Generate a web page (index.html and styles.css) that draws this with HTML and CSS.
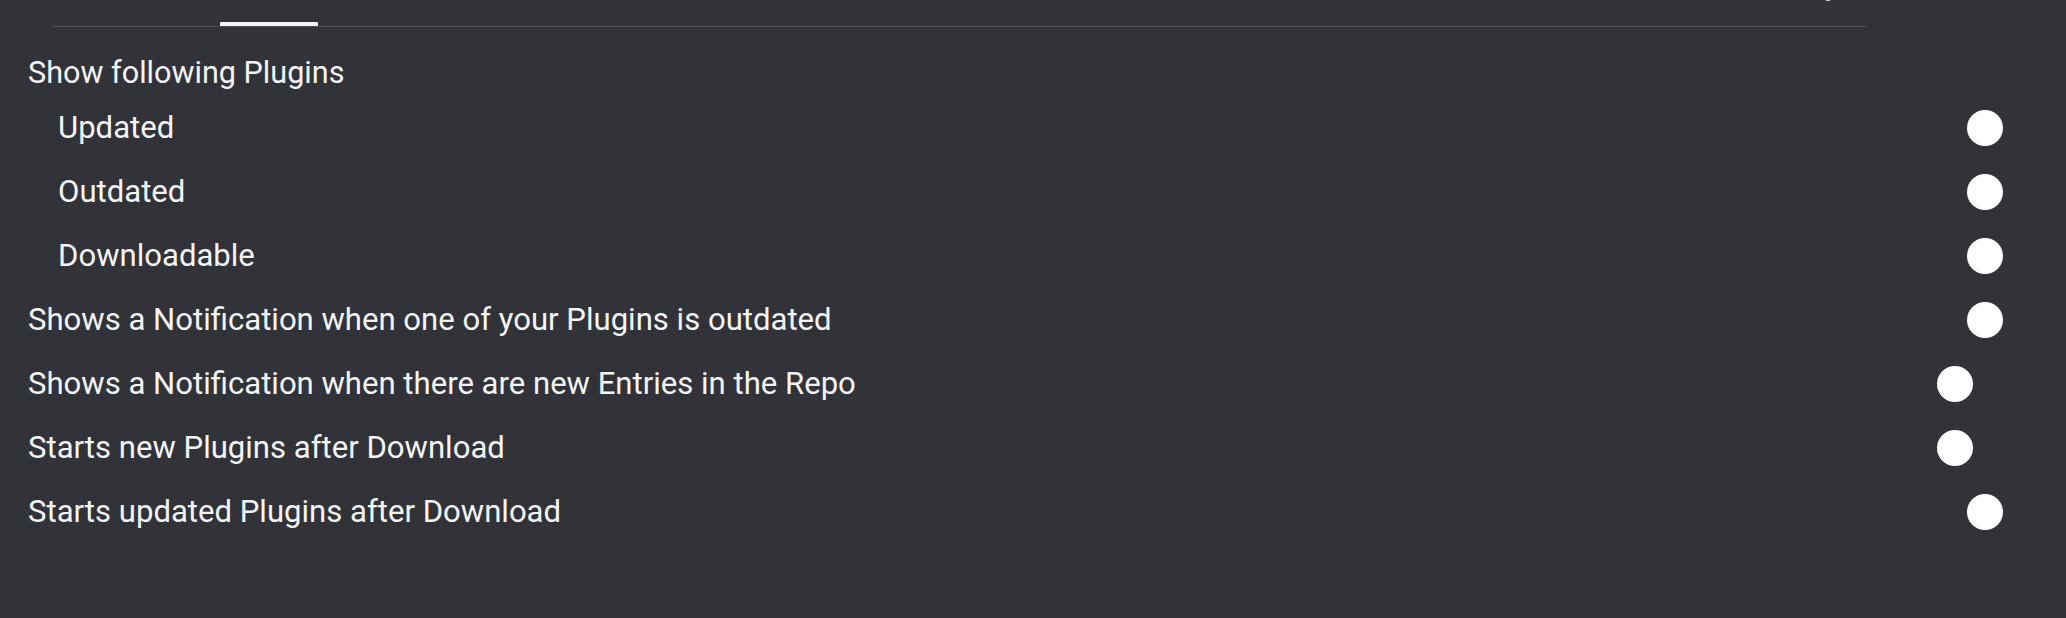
FILE: index.html
```html
<!DOCTYPE html>
<html>
<head>
<meta charset="utf-8">
<link rel="stylesheet" href="styles.css">
</head>
<body>
<div class="tabbar">
  <div class="tab-indicator"></div>
  <div class="tab-spacer"></div>
  <div class="tab-icon"></div>
</div>
<div class="settings">
  <div class="group-title">Show following Plugins</div>
  <div class="rows">
    <div class="row sub"><span class="label">Updated</span><span class="switch on"><span class="knob"></span></span></div>
    <div class="row sub"><span class="label">Outdated</span><span class="switch on"><span class="knob"></span></span></div>
    <div class="row sub"><span class="label">Downloadable</span><span class="switch on"><span class="knob"></span></span></div>
    <div class="row"><span class="label">Shows a Notification when one of your Plugins is outdated</span><span class="switch on"><span class="knob"></span></span></div>
    <div class="row"><span class="label">Shows a Notification when there are new Entries in the Repo</span><span class="switch"><span class="knob"></span></span></div>
    <div class="row"><span class="label">Starts new Plugins after Download</span><span class="switch"><span class="knob"></span></span></div>
    <div class="row"><span class="label">Starts updated Plugins after Download</span><span class="switch on"><span class="knob"></span></span></div>
  </div>
</div>
</body>
</html>
```
FILE: styles.css
```css
html, body {
  margin: 0;
  padding: 0;
  background: #313338;
  height: 100%;
}
body {
  color: #f4f5f7;
  font-family: Roboto, "Noto Sans", sans-serif;
  overflow: hidden;
}
.tabbar {
  display: flex;
  height: 26px;
  margin-left: 53px;
  width: 1813px;
  border-bottom: 1px solid #4e5058;
}
.tab-indicator {
  align-self: flex-end;
  margin-left: 167px;
  width: 98px;
  height: 4px;
  background: #f2f3f5;
  border-radius: 1px 1px 0 0;
}
.tab-spacer {
  flex: 1;
}
.tab-icon {
  align-self: flex-start;
  width: 10px;
  height: 10px;
  margin-top: -9px;
  margin-right: 33px;
  border-radius: 50%;
  background: #dbdee1;
}
.settings {
  padding: 0 60px 0 28px;
}
.group-title {
  margin-top: 26px;
  height: 40px;
  line-height: 40px;
  font-size: 30.6px;
  white-space: nowrap;
}
.rows {
  margin-top: 3px;
  display: flex;
  flex-direction: column;
}
.row {
  height: 64px;
  display: flex;
  align-items: center;
  justify-content: space-between;
}
.row.sub {
  padding-left: 30px;
}
.label {
  font-size: 31.1px;
  line-height: 40px;
  white-space: nowrap;
}
.switch {
  position: relative;
  width: 72px;
  height: 44px;
  border-radius: 22px;
  flex: none;
}
.knob {
  position: absolute;
  top: 4px;
  left: 3px;
  width: 36px;
  height: 36px;
  border-radius: 50%;
  background: #ffffff;
}
.switch.on .knob {
  left: 33px;
}
```
